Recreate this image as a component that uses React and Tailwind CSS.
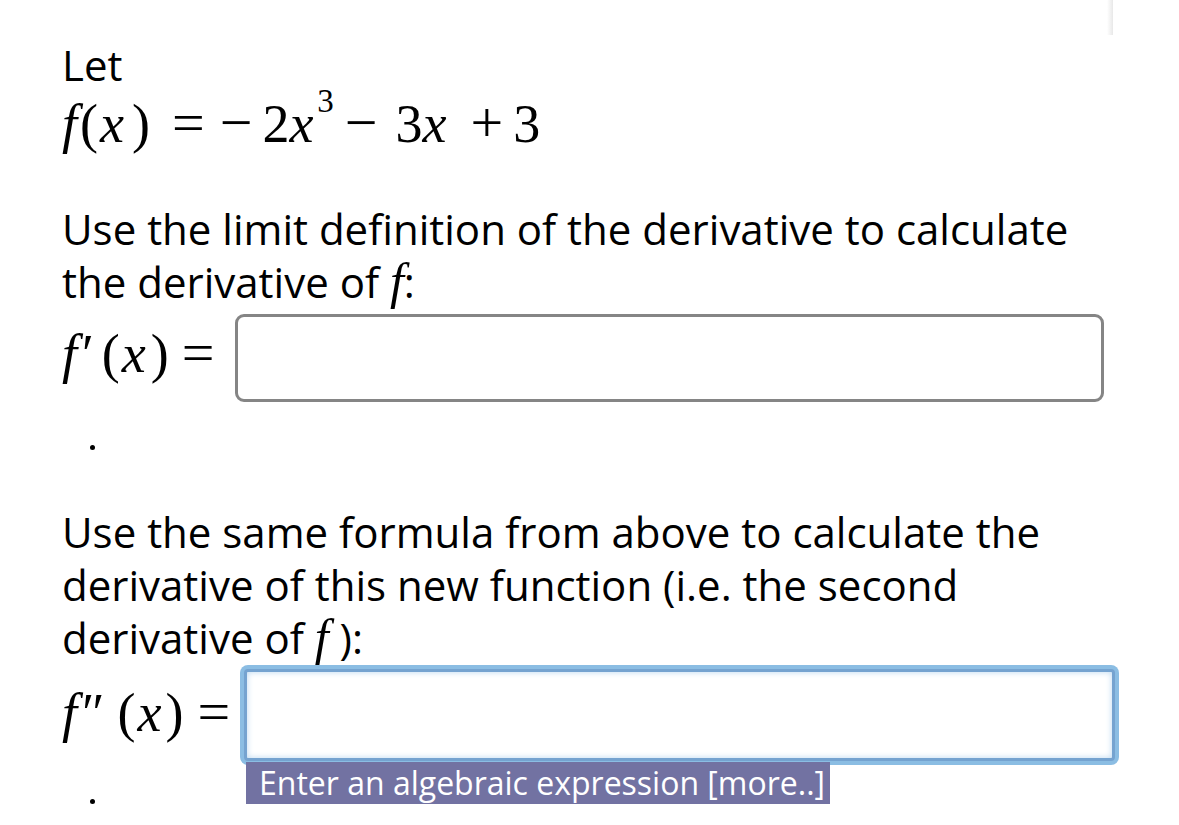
import React from "react";

const S = "font-['Liberation_Serif',serif]";
const OP = "text-[58px] leading-none";

export default function App() {
  return (
    <div className="relative min-h-[825px] w-[1179px] bg-white text-black">
      <div className="absolute left-[1107px] top-0 h-[35px] w-[6px] bg-gradient-to-r from-white to-[#e8e8e8]" />
      <div className="flex flex-col pl-[62px] pt-[38px] font-['Open_Sans',sans-serif] text-[42px] leading-[53px]">
        <div>Let</div>
        <div className={S + " whitespace-nowrap text-[54px] leading-[66px]"}>
          <span className="italic">f</span>
          <span className="ml-[3px]">(</span>
          <span className="ml-[2px] italic">x</span>
          <span className="ml-[8px]">)</span>
          <span className={"ml-[22px] " + OP}>=</span>
          <span className={"ml-[15px] " + OP}>−</span>
          <span className="ml-[10px]">2</span>
          <span className="italic">x</span>
          <sup className="relative top-[-30px] ml-[4px] text-[33px]">3</sup>
          <span className={"ml-[11px] " + OP}>−</span>
          <span className="ml-[18px]">3</span>
          <span className="italic">x</span>
          <span className={"ml-[24px] " + OP}>+</span>
          <span className="ml-[10px]">3</span>
        </div>
        <div className="mt-[45px]">
          Use the limit definition of the derivative to calculate
          <br />
          the derivative of{" "}
          <span className={S + " italic text-[50px]"}>f</span>:
        </div>
        <div className="mt-[6px] flex items-start">
          <div className={S + " mt-[7px] w-[173px] shrink-0 whitespace-nowrap text-[54px] leading-[66px]"}>
            <span className="italic">f</span>
            <span className="ml-[5px]">′</span>
            <span className="ml-[8px]">(</span>
            <span className="ml-[2px] italic">x</span>
            <span className="ml-[5px]">)</span>
            <span className={"ml-[13px] " + OP}>=</span>
          </div>
          <div className="h-[88px] w-[869px] rounded-[9px] border-[3px] border-[#858585] bg-white" />
        </div>
        <div className="ml-[28px] mt-[43px] h-[5px] w-[5px] rounded-full bg-black" />
        <div className="mt-[55px]">
          Use the same formula from above to calculate the
          <br />
          derivative of this new function (i.e. the second
          <br />
          derivative of{" "}
          <span className={S + " italic text-[50px]"}>f</span> ):
        </div>
        <div className="mt-[5px] flex items-start">
          <div className={S + " mt-[11px] w-[182px] shrink-0 whitespace-nowrap text-[54px] leading-[66px]"}>
            <span className="italic">f</span>
            <span className="ml-[5px]">″</span>
            <span className="ml-[13px]">(</span>
            <span className="ml-[2px] italic">x</span>
            <span className="ml-[4px]">)</span>
            <span className={"ml-[14px] " + OP}>=</span>
          </div>
          <div className="relative h-[92px] w-[871px] rounded-[4px] border-[3px] border-[#75a3d0] bg-white shadow-[0_0_0_4px_#8bbde3,inset_0_0_6px_#b9d7f0]">
            <div className="absolute left-[-1px] top-[90px] flex h-[42px] w-[584px] items-center whitespace-nowrap bg-[#7272a2] pl-[13px] text-[32px] leading-none text-white">
              Enter an algebraic expression [more..]
            </div>
          </div>
        </div>
        <div className="ml-[28px] mt-[38px] h-[5px] w-[5px] rounded-full bg-black" />
      </div>
    </div>
  );
}
